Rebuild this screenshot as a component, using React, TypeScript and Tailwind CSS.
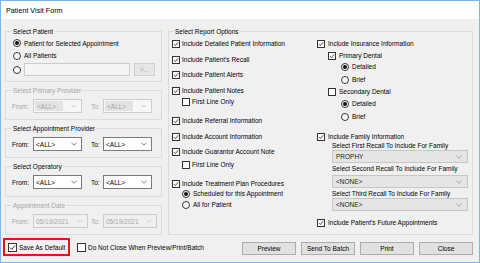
import React from 'react';

function Check({ checked = false, big = false }: { checked?: boolean; big?: boolean }) {
  return (
    <span
      className={
        big
          ? 'flex-none inline-flex items-center justify-center bg-white border border-[#333333] w-[9px] h-[9px]'
          : 'flex-none inline-flex items-center justify-center bg-white border border-[#333333] w-[8px] h-[8px]'
      }
    >
      {checked && (
        <svg width={big ? 7 : 6} height={big ? 7 : 6} viewBox="0 0 6 6">
          <path d="M0.9 3.1 L2.4 4.6 L5.2 1.2" fill="none" stroke="#222" strokeWidth="0.8" />
        </svg>
      )}
    </span>
  );
}

function Radio({ checked = false }: { checked?: boolean }) {
  return (
    <span className="flex-none inline-flex items-center justify-center bg-white border border-[#333333] rounded-full w-[8px] h-[8px]">
      {checked && <span className="w-[4px] h-[4px] rounded-full bg-[#111111]" />}
    </span>
  );
}

function Chevron({ color = '#555' }: { color?: string }) {
  return (
    <svg width="6" height="4" viewBox="0 0 6 4" className="flex-none">
      <path d="M0.5 0.8 L3 3.2 L5.5 0.8" fill="none" stroke={color} strokeWidth="0.7" />
    </svg>
  );
}

function CheckRow({ label, checked, cls, gap3 }: { label: string; checked?: boolean; cls: string; gap3?: boolean }) {
  return (
    <div className={cls + ' flex items-center h-[9px] leading-[9px] whitespace-nowrap'}>
      <Check checked={checked} />
      <span className={gap3 ? 'ml-[3px]' : 'ml-[2px]'}>{label}</span>
    </div>
  );
}

function RadioRow({ label, checked, cls }: { label: string; checked?: boolean; cls: string }) {
  return (
    <div className={cls + ' flex items-center h-[9px] leading-[9px] whitespace-nowrap'}>
      <Radio checked={checked} />
      <span className="ml-[3px]">{label}</span>
    </div>
  );
}

function EnabledSelect({ w, value }: { w: string; value: string }) {
  return (
    <div className={w + ' h-[14px] bg-white border border-[#7a7a7a] flex items-center pl-[2px] pr-[4px] justify-between'}>
      <span className="leading-[9px]">{value}</span>
      <Chevron color="#444" />
    </div>
  );
}

function DisabledSelect({ w, value }: { w: string; value: string }) {
  return (
    <div className={w + ' h-[14px] bg-[#f7f7f7] border border-[#cccccc] flex items-center p-[1px] pr-[4px]'}>
      <span className="h-full flex-1 bg-[#e3e3e3] text-[#a6a6a6] pl-[2px] flex items-center leading-[9px] mr-[8px]">{value}</span>
      <Chevron color="#b5b5b5" />
    </div>
  );
}

function DateBox({ w }: { w: string }) {
  return (
    <div className={w + ' h-[14px] bg-[#f0f0f0] border border-[#cccccc] flex items-center justify-between pl-[2px] pr-[4px] text-[#a6a6a6]'}>
      <span className="leading-[9px]">05/19/2021</span>
      <Chevron color="#bdbdbd" />
    </div>
  );
}

function GraySelect({ value, cls }: { value: string; cls: string }) {
  return (
    <div className={cls + ' ml-[15px] w-[136px] h-[13px] bg-[#e5e5e5] border border-[#c6c6c6] flex items-center justify-between pl-[3px] pr-[5px]'}>
      <span className="leading-[9px] text-[#1a1a1a]">{value}</span>
      <Chevron color="#8a8a8a" />
    </div>
  );
}

function Label({ text, cls }: { text: string; cls: string }) {
  return <div className={cls + ' ml-[15px] h-[9px] leading-[9px] whitespace-nowrap'}>{text}</div>;
}

function Button({ label }: { label: string }) {
  return (
    <div className="w-[54px] h-[13px] bg-[#e1e1e1] border border-[#adadad] flex items-center justify-center leading-[9px]">
      {label}
    </div>
  );
}

export default function App() {
  return (
    <div className="w-[480px] h-[263px] border border-[#7eb4ea] bg-[#f0f0f0] flex flex-col font-['Liberation_Sans',Arial,sans-serif] text-[6.5px] text-black overflow-hidden">
      <div className="h-[18px] bg-white flex items-center pl-[5px] text-[7.2px] leading-[9px] flex-none">Patient Visit Form</div>

      <div className="flex-1 flex flex-col">
        <div className="mt-[8px] ml-[4px] flex gap-[6px]">
          {/* Left column */}
          <div className="w-[157px] flex flex-col gap-[4px]">
            <fieldset className="border border-[#dcdcdc] h-[55px] min-w-0">
              <legend className="ml-[6px] px-[1px] h-[9px] leading-[9px]">Select Patient</legend>
              <div className="pl-[7px] pt-[1px] flex flex-col">
                <RadioRow cls="h-[12px]" label="Patient for Selected Appointment" checked />
                <RadioRow cls="mt-[2px]" label="All Patients" />
                <div className="mt-[3px] flex items-center h-[13px]">
                  <Radio />
                  <div className="ml-[3px] w-[106px] h-[13px] bg-[#f5f5f5] border border-[#cccccc]" />
                  <div className="ml-[4px] w-[21px] h-[13px] bg-[#e6e6e6] border border-[#cfcfcf] flex items-center justify-center text-[#a8a8a8] leading-[9px]">
                    &gt;...
                  </div>
                </div>
              </div>
            </fieldset>

            <fieldset className="border border-[#dcdcdc] h-[34px] min-w-0">
              <legend className="ml-[6px] px-[1px] h-[9px] leading-[9px] text-[#a6a6a6]">Select Primary Provider</legend>
              <div className="mt-[4px] ml-[6px] flex items-center h-[14px] text-[#a6a6a6]">
                <span className="w-[21px] leading-[9px]">From:</span>
                <DisabledSelect w="w-[49px]" value="<ALL>" />
                <span className="ml-[9px] w-[12px] leading-[9px]">To:</span>
                <DisabledSelect w="w-[49px]" value="<ALL>" />
              </div>
            </fieldset>

            <fieldset className="border border-[#dcdcdc] h-[34px] min-w-0">
              <legend className="ml-[6px] px-[1px] h-[9px] leading-[9px]">Select Appointment Provider</legend>
              <div className="mt-[4px] ml-[6px] flex items-center h-[14px]">
                <span className="w-[21px] leading-[9px]">From:</span>
                <EnabledSelect w="w-[49px]" value="<ALL>" />
                <span className="ml-[9px] w-[12px] leading-[9px]">To:</span>
                <EnabledSelect w="w-[49px]" value="<ALL>" />
              </div>
            </fieldset>

            <fieldset className="border border-[#dcdcdc] h-[35px] min-w-0">
              <legend className="ml-[6px] px-[1px] h-[9px] leading-[9px]">Select Operatory</legend>
              <div className="mt-[4px] ml-[6px] flex items-center h-[14px]">
                <span className="w-[21px] leading-[9px]">From:</span>
                <EnabledSelect w="w-[49px]" value="<ALL>" />
                <span className="ml-[9px] w-[12px] leading-[9px]">To:</span>
                <EnabledSelect w="w-[49px]" value="<ALL>" />
              </div>
            </fieldset>

            <fieldset className="border border-[#dcdcdc] h-[34px] min-w-0">
              <legend className="ml-[6px] px-[1px] h-[9px] leading-[9px] text-[#a6a6a6]">Appointment Date</legend>
              <div className="mt-[4px] ml-[6px] flex items-center h-[14px] text-[#a6a6a6]">
                <span className="w-[21px] leading-[9px]">From:</span>
                <DateBox w="w-[55px]" />
                <span className="ml-[3px] w-[12px] leading-[9px]">To:</span>
                <DateBox w="w-[54px]" />
              </div>
            </fieldset>
          </div>

          {/* Report options */}
          <fieldset className="border border-[#dcdcdc] w-[305px] h-[208px] min-w-0">
            <legend className="ml-[5px] px-[1px] h-[9px] leading-[9px]">Select Report Options</legend>
            <div className="flex pl-[3px]">
              <div className="w-[145px] flex flex-col">
                <CheckRow cls="mt-[3px]" label="Include Detailed Patient Information" checked />
                <CheckRow cls="mt-[7px]" label="Include Patient’s Recall" checked />
                <CheckRow cls="mt-[6px]" label="Include Patient Alerts" checked />
                <CheckRow cls="mt-[7px]" label="Include Patient Notes" checked />
                <CheckRow cls="mt-[2px] ml-[10px]" label="First Line Only" />
                <CheckRow cls="mt-[10px]" label="Include Referral Information" checked />
                <CheckRow cls="mt-[7px]" label="Include Account Information" checked />
                <CheckRow cls="mt-[6px]" label="Include Guarantor Account Note" checked />
                <CheckRow cls="mt-[4px] ml-[10px]" label="First Line Only" />
                <CheckRow cls="mt-[10px]" label="Include Treatment Plan Procedures" checked />
                <RadioRow cls="mt-[1px] ml-[10px]" label="Scheduled for this Appointment" checked />
                <RadioRow cls="mt-[2px] ml-[10px]" label="All for Patient" />
              </div>
              <div className="flex-1 flex flex-col">
                <CheckRow cls="mt-[3px]" label="Include Insurance Information" checked gap3 />
                <CheckRow cls="mt-[3px] ml-[11px]" label="Primary Dental" checked gap3 />
                <RadioRow cls="mt-[2px] ml-[24px]" label="Detailed" checked />
                <RadioRow cls="mt-[4px] ml-[24px]" label="Brief" />
                <CheckRow cls="mt-[3px] ml-[11px]" label="Secondary Dental" gap3 />
                <RadioRow cls="mt-[3px] ml-[24px]" label="Detailed" checked />
                <RadioRow cls="mt-[4px] ml-[24px]" label="Brief" />
                <CheckRow cls="mt-[11px]" label="Include Family Information" checked gap3 />
                <Label cls="mt-0" text="Select First Recall To Include For Family" />
                <GraySelect cls="mt-0" value="PROPHY" />
                <Label cls="mt-[1px]" text="Select Second Recall To Include For Family" />
                <GraySelect cls="mt-[2px]" value="<NONE>" />
                <Label cls="mt-[1px]" text="Select Third Recall To Include For Family" />
                <GraySelect cls="mt-0" value="<NONE>" />
                <CheckRow cls="mt-[7px]" label="Include Patient’s Future Appointments" checked gap3 />
              </div>
            </div>
          </fieldset>
        </div>

        {/* Bottom row */}
        <div className="mt-[3px] ml-[2px] mr-[6px] flex items-start">
          <div className="w-[67px] h-[18px] border-2 border-[#e3141b] pl-[3px] flex items-center">
            <Check checked big />
            <span className="ml-[2px] leading-[9px] whitespace-nowrap">Save As Default</span>
          </div>
          <div className="ml-[7px] h-[18px] flex items-center">
            <Check big />
            <span className="ml-[2px] leading-[9px] whitespace-nowrap">Do Not Close When Preview/Print/Batch</span>
          </div>
          <div className="ml-auto mt-[4px] flex gap-[5px]">
            <Button label="Preview" />
            <Button label="Send To Batch" />
            <Button label="Print" />
            <Button label="Close" />
          </div>
        </div>
      </div>
    </div>
  );
}
